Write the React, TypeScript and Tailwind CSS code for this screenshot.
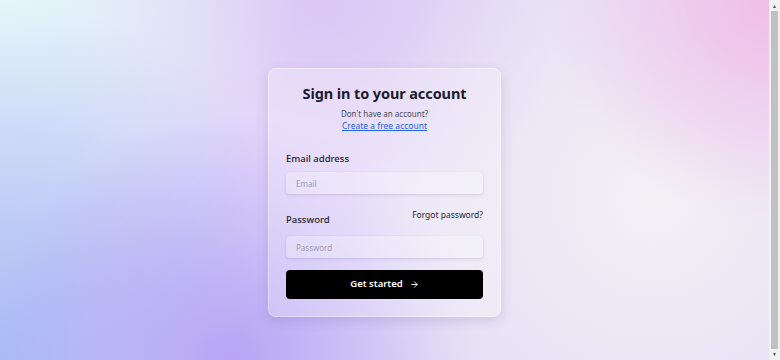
import { ArrowRight } from "lucide-react";

export default function App() {
  return (
    <div className="flex h-[360px] overflow-hidden font-['Noto_Sans','Open_Sans',sans-serif]">
      <main className="flex-1 bg-[radial-gradient(circle_at_100%_0%,#f1bde9_0%,transparent_26%),radial-gradient(circle_at_85%_55%,#f3f1f5_0%,transparent_45%),radial-gradient(circle_at_30%_100%,#b7a5f5_0%,transparent_38%),radial-gradient(circle_at_0%_100%,#a7bcf5_0%,transparent_42%),radial-gradient(circle_at_0%_0%,#e3f7fa_0%,transparent_35%),radial-gradient(circle_at_42%_0%,#dcc6f5_0%,transparent_42%),radial-gradient(circle_at_32%_50%,#ecdffc_0%,transparent_40%),linear-gradient(#e3ddf6,#e3ddf6)] pt-[68px]">
        <div className="mx-auto w-[233px] rounded-lg bg-white/25 border border-white/40 px-[17px] pt-[13px] pb-[17px] shadow-[0_4px_12px_rgba(90,80,140,0.18)]">
          <div className="text-center">
            <h1 className="text-[14.5px] font-bold leading-[22px] tracking-[-0.1px] text-[#1c1b2e]">Sign in to your account</h1>
            <p className="mt-[4px] text-[8px] leading-[12px] text-[#4b4a5c]">Don't have an account?</p>
            <a href="#" className="block text-[8.5px] leading-[12px] text-[#2563eb] underline">Create a free account</a>
          </div>

          <form className="mt-[20px]">
            <label className="block text-[9.5px] font-medium leading-[14px] text-[#1f1e30]">Email address</label>
            <input
              placeholder="Email"
              className="mt-[6px] block w-full h-[22px] rounded-[4px] bg-white/25 px-[10px] text-[8px] text-[#333] placeholder:text-[#a09cb4] shadow-[0_1px_3px_rgba(80,70,130,0.2)] outline-none"
            />

            <div className="mt-[15px] flex items-start justify-between">
              <label className="mt-[4px] text-[9.5px] font-medium leading-[14px] text-[#1f1e30]">Password</label>
              <a href="#" className="text-[8.5px] leading-[12px] text-[#1f1e30]">Forgot password?</a>
            </div>
            <input
              type="password"
              placeholder="Password"
              className="mt-[9px] block w-full h-[22px] rounded-[4px] bg-white/25 px-[10px] text-[8px] text-[#333] placeholder:text-[#a09cb4] shadow-[0_1px_3px_rgba(80,70,130,0.2)] outline-none"
            />

            <button
              type="button"
              className="mt-[12px] flex w-full h-[29px] items-center justify-center gap-[7px] rounded-[4px] bg-black text-[9.5px] font-semibold text-white"
            >
              Get started
              <ArrowRight className="w-[9px] h-[9px]" strokeWidth={2.5} />
            </button>
          </form>
        </div>
      </main>

      <aside className="flex w-[11px] flex-col items-center bg-[#f1f1f1]">
        <span className="mt-[3px] text-[5px] leading-[6px] text-[#505050]">▲</span>
        <div className="mt-[2px] w-[7px] flex-1 bg-[#c1c1c1]" />
        <span className="mt-[2px] mb-[3px] text-[5px] leading-[6px] text-[#505050]">▼</span>
      </aside>
    </div>
  );
}
